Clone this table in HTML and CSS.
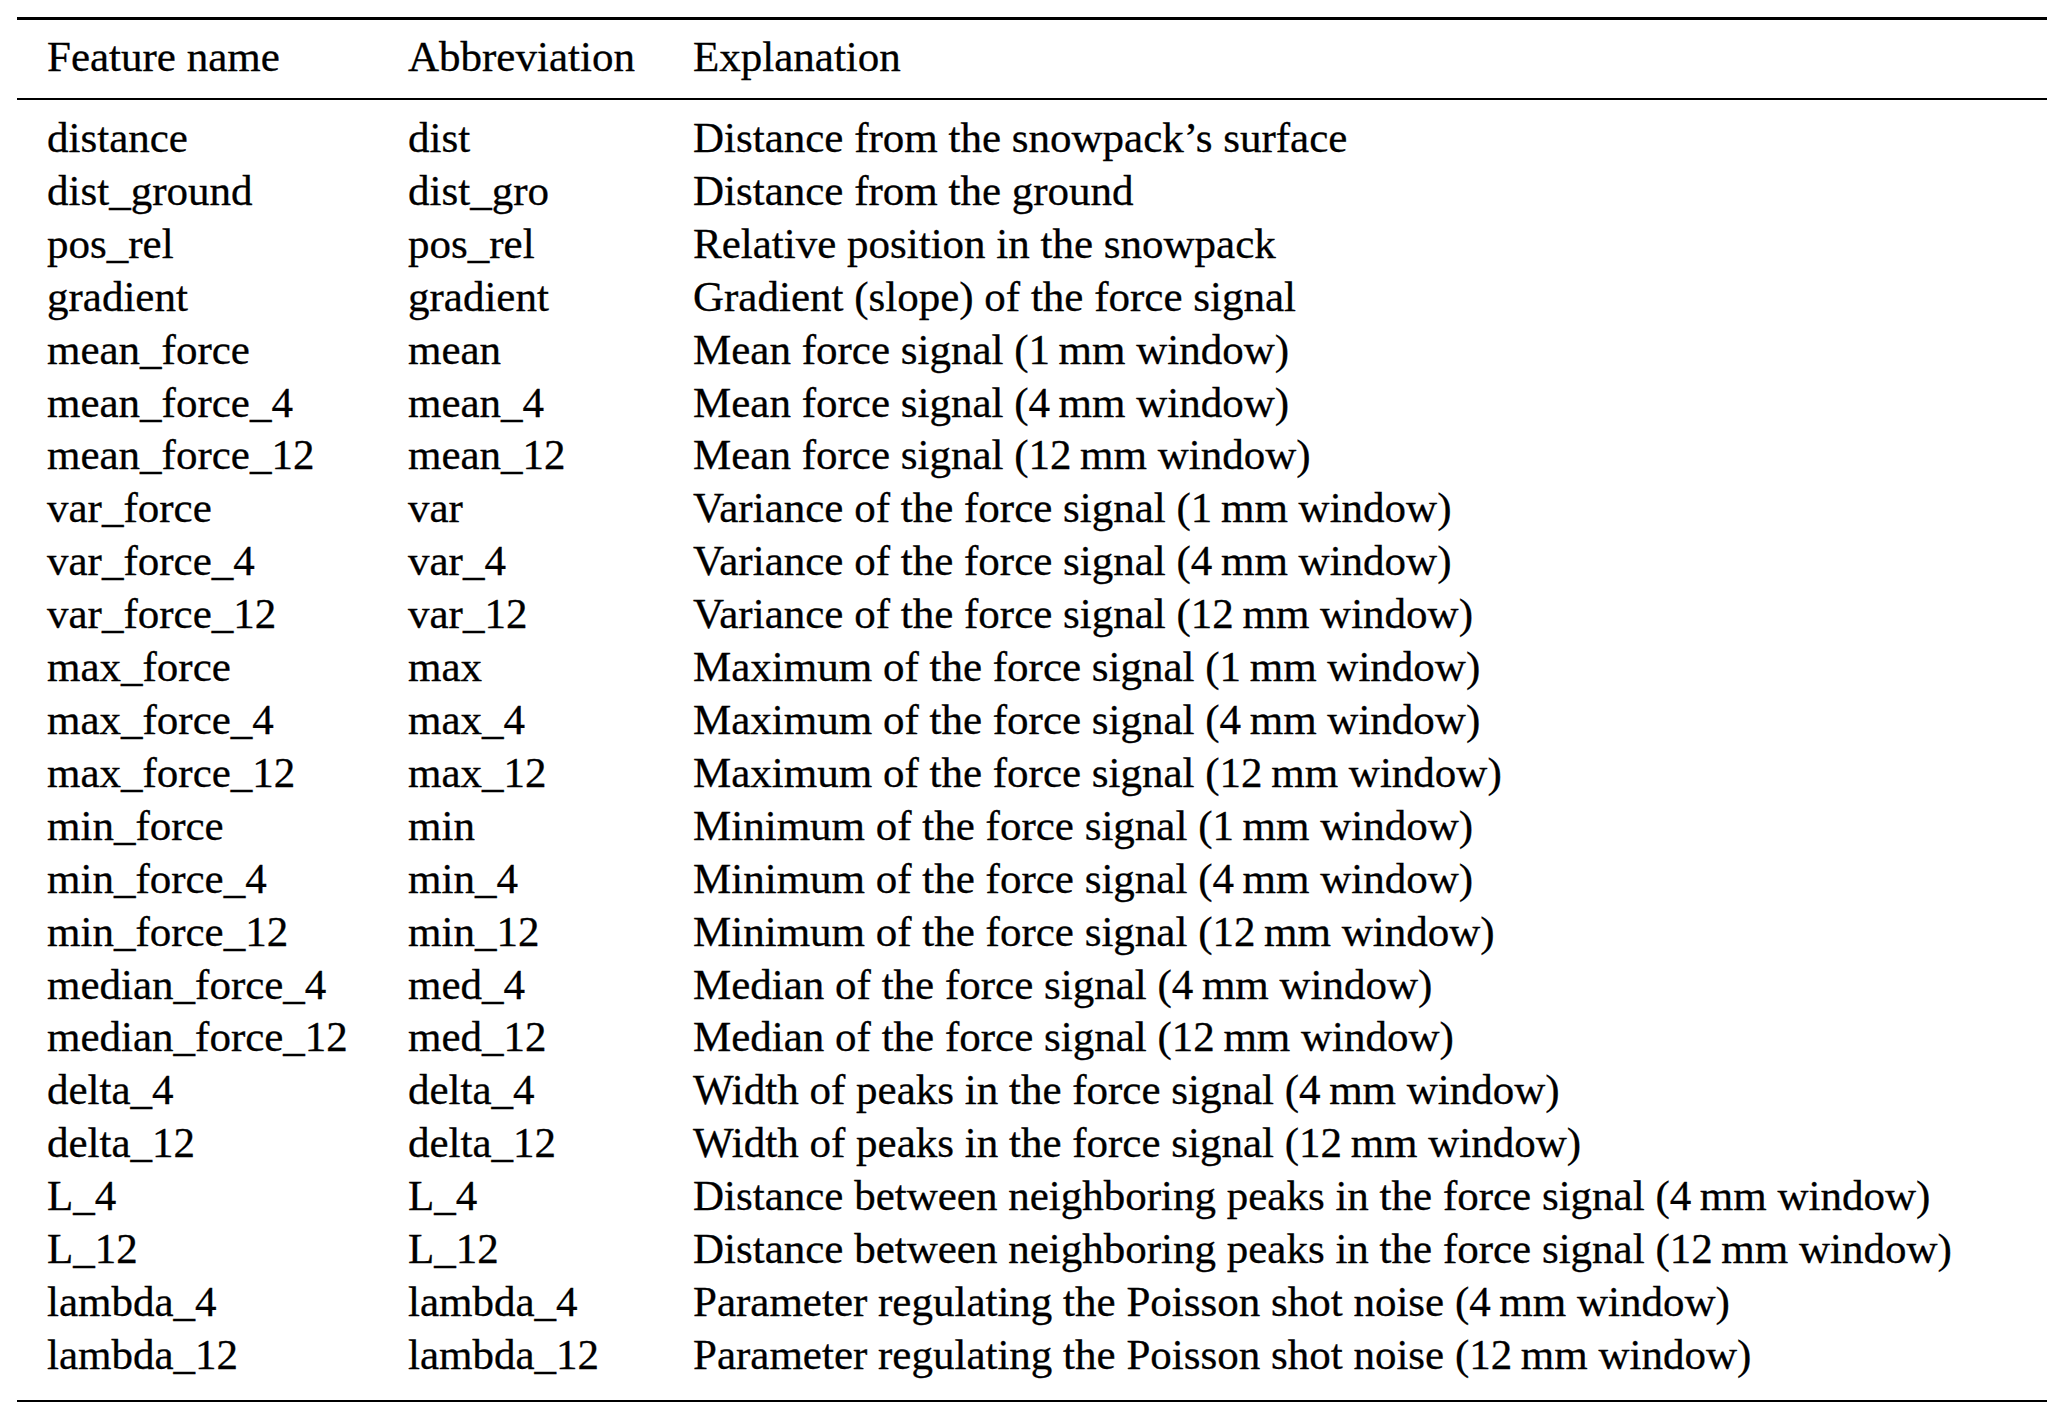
FILE: index.html
```html
<!DOCTYPE html>
<html>
<head>
<meta charset="utf-8">
<link rel="stylesheet" href="styles.css">
</head>
<body>
<div class="page">
<table class="features">
<colgroup><col class="c1"><col class="c2"><col class="c3"></colgroup>
<thead>
<tr><th class="first">Feature name</th><th>Abbreviation</th><th>Explanation</th></tr>
</thead>
<tbody>
<tr class="top"><td class="first">distance</td><td>dist</td><td>Distance from the snowpack’s surface</td></tr>
<tr><td class="first">dist_ground</td><td>dist_gro</td><td>Distance from the ground</td></tr>
<tr><td class="first">pos_rel</td><td>pos_rel</td><td>Relative position in the snowpack</td></tr>
<tr><td class="first">gradient</td><td>gradient</td><td>Gradient (slope) of the force signal</td></tr>
<tr><td class="first">mean_force</td><td>mean</td><td>Mean force signal (1&thinsp;mm window)</td></tr>
<tr><td class="first">mean_force_4</td><td>mean_4</td><td>Mean force signal (4&thinsp;mm window)</td></tr>
<tr><td class="first">mean_force_12</td><td>mean_12</td><td>Mean force signal (12&thinsp;mm window)</td></tr>
<tr><td class="first">var_force</td><td>var</td><td>Variance of the force signal (1&thinsp;mm window)</td></tr>
<tr><td class="first">var_force_4</td><td>var_4</td><td>Variance of the force signal (4&thinsp;mm window)</td></tr>
<tr><td class="first">var_force_12</td><td>var_12</td><td>Variance of the force signal (12&thinsp;mm window)</td></tr>
<tr><td class="first">max_force</td><td>max</td><td>Maximum of the force signal (1&thinsp;mm window)</td></tr>
<tr><td class="first">max_force_4</td><td>max_4</td><td>Maximum of the force signal (4&thinsp;mm window)</td></tr>
<tr><td class="first">max_force_12</td><td>max_12</td><td>Maximum of the force signal (12&thinsp;mm window)</td></tr>
<tr><td class="first">min_force</td><td>min</td><td>Minimum of the force signal (1&thinsp;mm window)</td></tr>
<tr><td class="first">min_force_4</td><td>min_4</td><td>Minimum of the force signal (4&thinsp;mm window)</td></tr>
<tr><td class="first">min_force_12</td><td>min_12</td><td>Minimum of the force signal (12&thinsp;mm window)</td></tr>
<tr><td class="first">median_force_4</td><td>med_4</td><td>Median of the force signal (4&thinsp;mm window)</td></tr>
<tr><td class="first">median_force_12</td><td>med_12</td><td>Median of the force signal (12&thinsp;mm window)</td></tr>
<tr><td class="first">delta_4</td><td>delta_4</td><td>Width of peaks in the force signal (4&thinsp;mm window)</td></tr>
<tr><td class="first">delta_12</td><td>delta_12</td><td>Width of peaks in the force signal (12&thinsp;mm window)</td></tr>
<tr><td class="first">L_4</td><td>L_4</td><td>Distance between neighboring peaks in the force signal (4&thinsp;mm window)</td></tr>
<tr><td class="first">L_12</td><td>L_12</td><td>Distance between neighboring peaks in the force signal (12&thinsp;mm window)</td></tr>
<tr><td class="first">lambda_4</td><td>lambda_4</td><td>Parameter regulating the Poisson shot noise (4&thinsp;mm window)</td></tr>
<tr class="last"><td class="first">lambda_12</td><td>lambda_12</td><td>Parameter regulating the Poisson shot noise (12&thinsp;mm window)</td></tr>
</tbody>
</table>
</div>
</body>
</html>
```

FILE: styles.css
```css
html, body {
  margin: 0;
  padding: 0;
  background: #ffffff;
}
.page {
  padding: 17px 0 0 17px;
}
.features {
  width: 2030px;
  table-layout: fixed;
  border-collapse: collapse;
  font-family: "Liberation Serif", "Times New Roman", serif;
  font-size: 43px;
  color: #000;
  -webkit-text-stroke: 0.3px #000;
  border-bottom: 2px solid #000;
}
.c1 { width: 391px; }
.c2 { width: 285px; }
.c3 { width: auto; }
.features th {
  font-weight: normal;
  text-align: left;
  padding: 0 0 4px 0;
  height: 74px;
  line-height: 74px;
  white-space: nowrap;
}
.features thead tr {
  border-top: 3px solid #000;
  border-bottom: 2px solid #000;
}
.features td {
  padding: 0;
  height: 52.9px;
  line-height: 52.9px;
  white-space: nowrap;
}
.features .first {
  padding-left: 30px;
}
.features tr.top td {
  padding-top: 12px;
}
.features tr.last td {
  padding-bottom: 18px;
}
```
